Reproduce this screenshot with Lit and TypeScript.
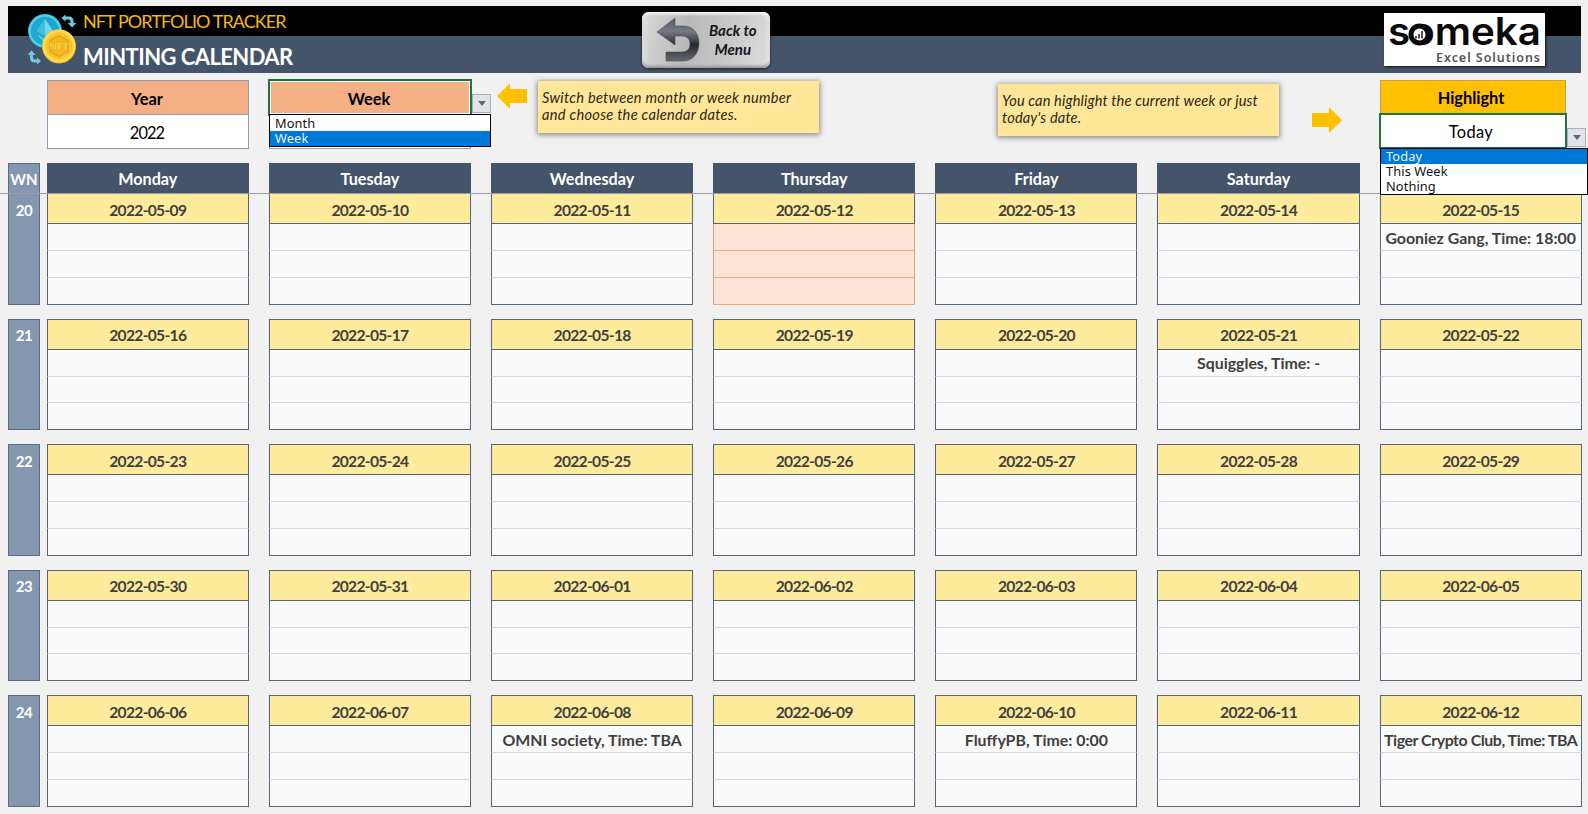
import { LitElement, html, svg, css } from "lit";
import { customElement, property } from "lit/decorators.js";
import { classMap } from "lit/directives/class-map.js";

const DAYS = ["Monday", "Tuesday", "Wednesday", "Thursday", "Friday", "Saturday", ""];
const TODAY = "2022-05-12";
const EVENTS: Record<string, string> = {
  "2022-05-15": "Gooniez Gang, Time: 18:00",
  "2022-05-21": "Squiggles, Time: -",
  "2022-06-08": "OMNI society, Time: TBA",
  "2022-06-10": "FluffyPB, Time: 0:00",
  "2022-06-12": "Tiger Crypto Club, Time: TBA",
};
const WEEKS = [20, 21, 22, 23, 24].map((n, w) => ({
  n,
  dates: DAYS.map((_, d) =>
    new Date(Date.UTC(2022, 4, 9 + w * 7 + d)).toISOString().slice(0, 10)
  ),
}));

@customElement("day-card")
export class DayCard extends LitElement {
  @property() date = "";
  @property() entry = "";
  @property({ type: Boolean }) today = false;

  static styles = css`
    :host { display: block; min-width: 0; height: 111.4px; }
    .card { height: 100%; box-sizing: border-box; display: grid; grid-template-rows: 31px 1fr 1fr 1fr; }
    .date {
      box-sizing: border-box; border: 1px solid #55647a; background: #ffeb9c;
      display: flex; align-items: center; justify-content: center;
      font-size: 15.6px; letter-spacing: -0.7px; padding-top: 2px;
    }
    .slot {
      box-sizing: border-box; background: #fafafa; border: 1px solid #55647a; border-top: 0;
      border-bottom-color: #d3d8e1; display: flex; justify-content: center; align-items: center;
      white-space: nowrap; font-size: 15.9px; letter-spacing: 0;
    }
    .slot.tight { letter-spacing: -0.43px; }
    .slot:last-child { border-bottom-color: #55647a; }
    .today .slot { background: #fce4d6; border-color: #ea9a6a; border-bottom-color: #f0a57c; }
  `;

  render() {
    return html`<div class=${classMap({ card: true, today: this.today })}>
      <div class="date">${this.date}</div>
      <div class=${classMap({ slot: true, tight: this.entry.length > 25 })}>${this.entry}</div>
      <div class="slot"></div>
      <div class="slot"></div>
    </div>`;
  }
}

@customElement("drop-list")
export class DropList extends LitElement {
  @property({ type: Array }) items: string[] = [];
  @property() selected = "";

  static styles = css`
    :host { display: block; box-sizing: border-box; border: 1px solid #000; background: #fff; }
    .item {
      font: 12.8px/15.8px "Noto Sans", sans-serif; letter-spacing: 0.1px; height: 15.2px; padding-left: 5px; color: #111;
    }
    .on { background: #0078d7; color: #e8f3fc; }
  `;

  render() {
    return this.items.map(
      (i) => html`<div class=${classMap({ item: true, on: i === this.selected })}>${i}</div>`
    );
  }
}

@customElement("app-root")
export class AppRoot extends LitElement {
  static styles = css`
    :host {
      display: block; position: relative; width: 1588px; height: 814px; overflow: hidden;
      box-sizing: border-box; padding: 6px 6px 0 8px;
      background: #f1f1f1; font-family: Lato, sans-serif; color: #3f3f3f; font-weight: 700;
    }
    .header {
      height: 67px; width: 1573px; display: flex; align-items: flex-start;
      background: linear-gradient(#000 30px, #44546a 30px);
    }
    .coins { margin: 7px 0 0 18px; width: 53px; height: 54px; flex: none; }
    .titles { margin-left: 4px; width: 559px; white-space: nowrap; }
    .brand { color: #f5b90a; font-weight: 400; font-size: 18px; line-height: 31px; letter-spacing: -0.92px; height: 30px; }
    .title { color: #fff; font-size: 22px; line-height: 42px; letter-spacing: -0.57px; }
    .back {
      margin-top: 6px; width: 128px; height: 56px; box-sizing: border-box; border-radius: 7px; flex: none;
      background: linear-gradient(100deg, #d9d9d9 0%, #b9b9b9 35%, #c7c7c7 65%, #dedede 100%);
      box-shadow: inset 0 2px 3px #f5f5f5, inset 0 -2px 3px #8f8f8f, inset 3px 0 4px #e2e2e2, inset -2px 0 3px #eee, 0 1px 3px #222;
      display: flex; align-items: center; color: #161616; font-style: italic; font-size: 15px; line-height: 18.6px; text-align: center;
      white-space: nowrap;
    }
    .back svg { margin: 0 9px 0 15px; width: 43px; height: 46px; flex: none; }
    .logo { margin: 7px 0 0 614px; width: 161px; height: 53px; background: #fff; box-shadow: 1px 1px 2px #111; flex: none; }
    .logo svg { display: block; overflow: visible; }

    .controls { display: flex; align-items: flex-start; height: 83px; padding: 7px 0 0 39px; }
    .field { width: 202px; position: relative; text-align: center; color: #000; font-size: 16.4px; flex: none; }
    .label, .value { box-sizing: border-box; height: 34px; border: 1px solid #8e9db3; display: flex; align-items: center; justify-content: center; }
    .label { height: 35px; background: #f4b084; padding-right: 2px; padding-top: 1px; }
    .value { background: #fff; border-top: 0; font-weight: 400; letter-spacing: -0.9px; padding: 2px 2px 0 0; }
    .week { margin-left: 20px; }
    .ring { position: absolute; border: 2px solid #217346; box-shadow: inset 0 0 0 1px #fff; box-sizing: border-box; }
    .week .ring { left: -1px; top: -1px; width: 204px; height: 37px; }
    .week drop-list { position: absolute; left: 0; top: 34px; width: 222px; height: 33px; text-align: left; padding-top: 0.6px; }
    .caret {
      position: absolute; width: 19px; height: 19px; box-sizing: border-box; border: 1px solid #a9b0bb; background: #e1e4ea;
      display: grid; place-items: center;
    }
    .week .caret { left: 203px; top: 14px; }
    .caret::after { content: ""; border: 4px solid transparent; border-top: 5px solid #666; border-bottom: 0; }
    .arrow { width: 30px; height: 26px; flex: none; }
    .arrow.l { margin: 3px 11px 0 26px; }
    .arrow.r { margin: 27px 38px 0 33px; }
    .note {
      box-sizing: border-box; width: 281px; height: 52px; padding: 8px 4px; background: #ffe699; flex: none;
      box-shadow: 0 1px 5px 1px #8b8b8b; font-style: italic; font-weight: 400; font-size: 14.6px; line-height: 17.4px; color: #2b2614;
      white-space: nowrap;
    }
    .n1 { margin-top: 1px; letter-spacing: 0.29px; }
    .n2 { margin: 4px 0 0 179px; letter-spacing: 0.15px; }
    .highlight { width: 186px; }
    .highlight .label { background: #ffc000; border-color: #c5a24a; height: 34px; padding-right: 4px; }
    .highlight .value { letter-spacing: 0.35px; padding-right: 4px; }
    .highlight .ring { left: -1px; top: 33px; width: 188px; height: 36px; }
    .highlight .caret { left: 187px; top: 48px; }
    .highlight drop-list { position: absolute; left: 0; top: 68px; width: 208px; height: 47px; text-align: left; z-index: 3; }

    .calendar { display: grid; grid-template-columns: 32px 1fr; column-gap: 6.7px; width: 1573.8px; }
    .days { display: grid; grid-template-columns: repeat(7, 1fr); column-gap: 20px; }
    .wn, .day { color: #fff; display: flex; align-items: center; justify-content: center; font-size: 15px; }
    .head { height: 30.4px; }
    .day { background: #44546a; padding-top: 1px; box-sizing: border-box; font-size: 16.2px; }
    .wn { background: #8497b0; box-sizing: border-box; border: 1px solid #5b6b84; }
    .wn.top { border-bottom: 0; padding-top: 1px; }
    .wn.num { align-items: flex-start; padding-top: 6.4px; height: 111.4px; letter-spacing: -0.4px; }
    .wn.first { border-top: 0; padding-top: 7.6px; }
    .gap { grid-column: 1 / -1; height: 14.1px; }
    .freeze { position: absolute; left: 0; top: 193px; width: 1588px; height: 1px; background: #999ca0; z-index: 1; }
  `;

  private coins = svg`
    <circle cx="19" cy="18" r="17" fill="#1da9cd"/><circle cx="19" cy="18" r="15.3" fill="none" stroke="#56cfe7" stroke-width="2.2"/>
    <path d="M19 6l8 12-8 5-8-5z" fill="#75d5eb"/><path d="M19 6v17l-8-5z" fill="#43bddb"/><path d="M11 21l8 5 8-5-8 10z" fill="#63cbe5"/>
    <circle cx="33" cy="33.500" r="17" fill="#f3ae13"/><circle cx="33" cy="33" r="15" fill="#fbc32c" stroke="#ffda50" stroke-width="3"/>
    <path d="M33 22.500l9 5v11l-9 5-9-5v-11z" fill="#f5b721" stroke="#e5a018" stroke-width="1.300"/>
    <text x="33" y="37" text-anchor="middle" font-family="Lato" font-size="10" font-weight="900" fill="#ffe04d" stroke="#dda018" stroke-width=".3">NFT</text>
    <path d="M38 5h5q3 0 3 4v2" fill="none" stroke="#74c8e3" stroke-width="3"/><path d="M41.800 10h8.400l-4.200 4.500z M35.500 5l4-3.500v7z" fill="#74c8e3"/>
    <path d="M5.500 41v4q0 3 4 3h3" fill="none" stroke="#74c8e3" stroke-width="3"/><path d="M1.500 42l4-4.500 4.500 4.500z M11 44.500l4 3.500-4 3.500z" fill="#74c8e3"/>`;

  render() {
    return html`
      <div class="header">
        <svg class="coins" viewBox="0 0 53 54">${this.coins}</svg>
        <div class="titles">
          <div class="brand">NFT PORTFOLIO TRACKER</div>
          <div class="title">MINTING CALENDAR</div>
        </div>
        <div class="back">
          <svg viewBox="0 0 43 46">
            <defs>
              <linearGradient id="g" x1="0" y1="0" x2="0" y2="1">
                <stop offset="0" stop-color="#53565d"/><stop offset=".3" stop-color="#767a83"/>
                <stop offset=".52" stop-color="#44474e"/><stop offset=".62" stop-color="#24262b"/><stop offset="1" stop-color="#686b72"/>
              </linearGradient>
            </defs>
            <path d="M0 15L18 1v8h8c10 0 16 7 16 17s-6 18-16 18H9v-9h16c5 0 8-3 8-8s-3-8-8-8h-7v9z" fill="url(#g)" stroke="#4b4d54" stroke-width=".6"/>
          </svg>
          <span>Back to<br />Menu</span>
        </div>
        <div class="logo">
          <svg width="161" height="53" viewBox="0 0 161 53">
            <text x="4" y="32" font-family="Inter" font-size="38" font-weight="600" textLength="153" lengthAdjust="spacingAndGlyphs" fill="#0a0a0a">someka</text>
            <circle cx="35.500" cy="21.500" r="8.500" fill="#fff" stroke="#0a0a0a" stroke-width="5"/>
            <path d="M32 25.500v-2.500M35 25.500v-4.500M38 25.500v-7.500" stroke="#333" stroke-width="1.700"/>
            <text x="52" y="49" font-family="Noto Sans" font-size="12.500" font-weight="600" textLength="104" fill="#555">Excel Solutions</text>
          </svg>
        </div>
      </div>

      <div class="controls">
        <div class="field"><div class="label">Year</div><div class="value">2022</div></div>
        <div class="field week">
          <div class="label">Week</div><div class="value"></div>
          <div class="ring"></div><div class="caret"></div>
          <drop-list .items=${["Month", "Week"]} selected="Week"></drop-list>
        </div>
        <svg class="arrow l" viewBox="0 0 30 26"><path d="M0 13L13 0v6h17v14H13v6z" fill="#ffc000"/></svg>
        <div class="note n1">Switch between month or week number<br />and choose the calendar dates.</div>
        <div class="note n2">You can highlight the current week or just<br />today's date.</div>
        <svg class="arrow r" viewBox="0 0 30 26"><path d="M30 13L17 0v6H0v14h17v6z" fill="#ffc000"/></svg>
        <div class="field highlight">
          <div class="label">Highlight</div><div class="value">Today</div>
          <div class="ring"></div><div class="caret"></div>
          <drop-list .items=${["Today", "This Week", "Nothing"]} selected="Today"></drop-list>
        </div>
      </div>

      <div class="calendar">
        <div class="wn top head">WN</div>
        <div class="days">${DAYS.map((d) => html`<div class="day">${d}</div>`)}</div>
        ${WEEKS.map(
          (w, i) => html`
            ${i ? html`<div class="gap"></div>` : ""}
            <div class=${classMap({ wn: true, num: true, first: i === 0 })}>${w.n}</div>
            <div class="days">
              ${w.dates.map(
                (d) => html`<day-card .date=${d} .entry=${EVENTS[d] ?? ""} ?today=${d === TODAY}></day-card>`
              )}
            </div>`
        )}
      </div>
      <div class="freeze"></div>
    `;
  }
}
